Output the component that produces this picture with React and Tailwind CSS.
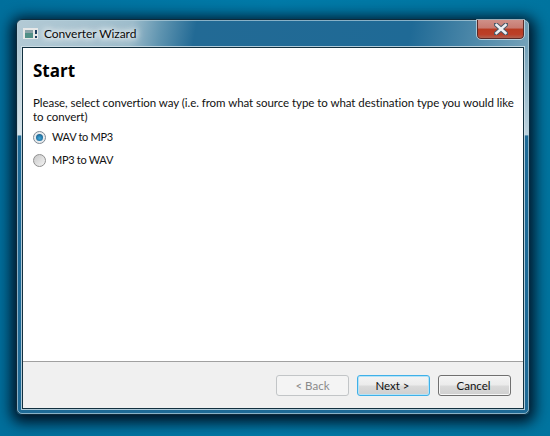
export default function App() {
  return (
    <div className="w-[550px] h-[436px] overflow-hidden bg-[linear-gradient(90deg,#006f9c_0%,#007aa8_50%,#00749f_100%)] pt-[19px] pl-[16px] font-['Lato',sans-serif] text-[11.5px] text-[#111]">
      <div className="relative w-[514px] h-[396px] rounded-[6px] border border-[#0e2a3a] outline outline-1 outline-[#b5d0dc]/70 -outline-offset-2 shadow-[0_3px_14px_5px_rgba(0,10,25,0.9)] bg-[linear-gradient(180deg,rgba(30,106,150,0)_115px,#1e6a96_116px),linear-gradient(180deg,rgba(255,255,255,0)_27px,rgba(255,255,255,0.5)_115px,rgba(255,255,255,0)_116px),linear-gradient(100deg,#b3cad5_0%,#a8c3d0_12%,#9dbccb_20%,#5f94b0_25%,#226a95_31%,#1f6a96_68%,#7aa5bb_90%,#7aa5bb_100%)] flex flex-col px-[5px] pb-[5px]">
        <div className="h-[27px] shrink-0 flex items-center pl-[1px]">
          <svg width="15" height="11" viewBox="0 0 15 11" className="mr-[6px] shrink-0">
            <rect x="0" y="0" width="15" height="11" fill="#e6e8e8" />
            <rect x="2" y="2" width="8" height="8" fill="#4f8f86" />
            <rect x="2" y="2" width="8" height="3" fill="#8aa3a8" />
            <rect x="12" y="2" width="2" height="4" fill="#1c3f5e" />
            <rect x="12" y="8" width="2" height="2" fill="#1c3f5e" />
          </svg>
          <span className="text-[#0a0a0a] [text-shadow:0_0_8px_#ffffff,0_0_8px_#ffffff,0_0_5px_#ffffff] text-[12px] tracking-[-0.05px]">Converter Wizard</span>
        </div>
        <div className="absolute top-0 right-[5px] w-[47px] h-[19px] rounded-b-[4px] border border-t-0 border-[#5a2a28] outline outline-1 outline-[#d8e4ea]/70 bg-[linear-gradient(180deg,#cf9088_0%,#c77a70_45%,#b83c22_50%,#bc3f28_80%,#b0604f_100%)] flex items-center justify-center">
          <svg width="14" height="12" viewBox="0 0 14 12">
            <path d="M2 1.5 L12 10.5 M12 1.5 L2 10.5" stroke="#4a5866" strokeWidth="4.5" strokeLinecap="square" />
            <path d="M2.5 2 L11.5 10 M11.5 2 L2.5 10" stroke="#eef1f4" strokeWidth="2.6" strokeLinecap="square" />
          </svg>
        </div>
        <div className="flex-1 flex flex-col border border-[#12303f] outline outline-1 outline-[#d5e2e9]/80 bg-white min-h-0">
          <div className="flex-1 px-[10px] pt-[11px]">
            <h1 className="text-[17px] leading-[24px] font-bold text-black font-['Open_Sans',sans-serif]">Start</h1>
            <p className="mt-[13px] leading-[14px] w-[483px] tracking-[-0.05px]">Please, select convertion way (i.e. from what source type to what destination type you would like to convert)</p>
            <div className="mt-[5px] flex flex-col gap-[6px] text-[11px] tracking-[-0.3px]">
              <label className="h-[17px] flex items-center gap-[6px]">
                <span className="w-[13px] h-[13px] rounded-full border border-[#7f8a94] bg-[#e9ecee] flex items-center justify-center">
                  <span className="w-[7px] h-[7px] rounded-full bg-[radial-gradient(circle_at_50%_60%,#3fa9dc,#0f4c78)]"></span>
                </span>
                WAV to MP3
              </label>
              <label className="h-[17px] flex items-center gap-[6px]">
                <span className="w-[13px] h-[13px] rounded-full border border-[#8f8f8f] bg-[linear-gradient(135deg,#c8c8c8,#f4f4f4)]"></span>
                MP3 to WAV
              </label>
            </div>
          </div>
          <div className="h-[47px] shrink-0 border-t border-[#a0a0a0] bg-[#f0f0f0] flex justify-end items-start gap-[8px] pt-[13px] pr-[12px]">
            <button className="w-[73px] h-[21px] rounded-[3px] border border-[#c2c5c7] bg-[#f4f4f4] text-[#8a8a8a] leading-none">&lt; Back</button>
            <button className="w-[73px] h-[21px] pr-[2px] rounded-[3px] border border-[#3fb0e8] bg-[linear-gradient(180deg,#f4f4f4_0%,#ebebeb_48%,#dadada_52%,#cfcfcf_100%)] shadow-[inset_0_0_0_1px_#b5e3f7] leading-none">Next &gt;</button>
            <button className="w-[73px] h-[21px] pr-[2px] rounded-[3px] border border-[#707070] bg-[linear-gradient(180deg,#f4f4f4_0%,#ebebeb_48%,#dadada_52%,#cfcfcf_100%)] shadow-[inset_0_0_0_1px_#f6f6f6] leading-none">Cancel</button>
          </div>
        </div>
      </div>
    </div>
  );
}
